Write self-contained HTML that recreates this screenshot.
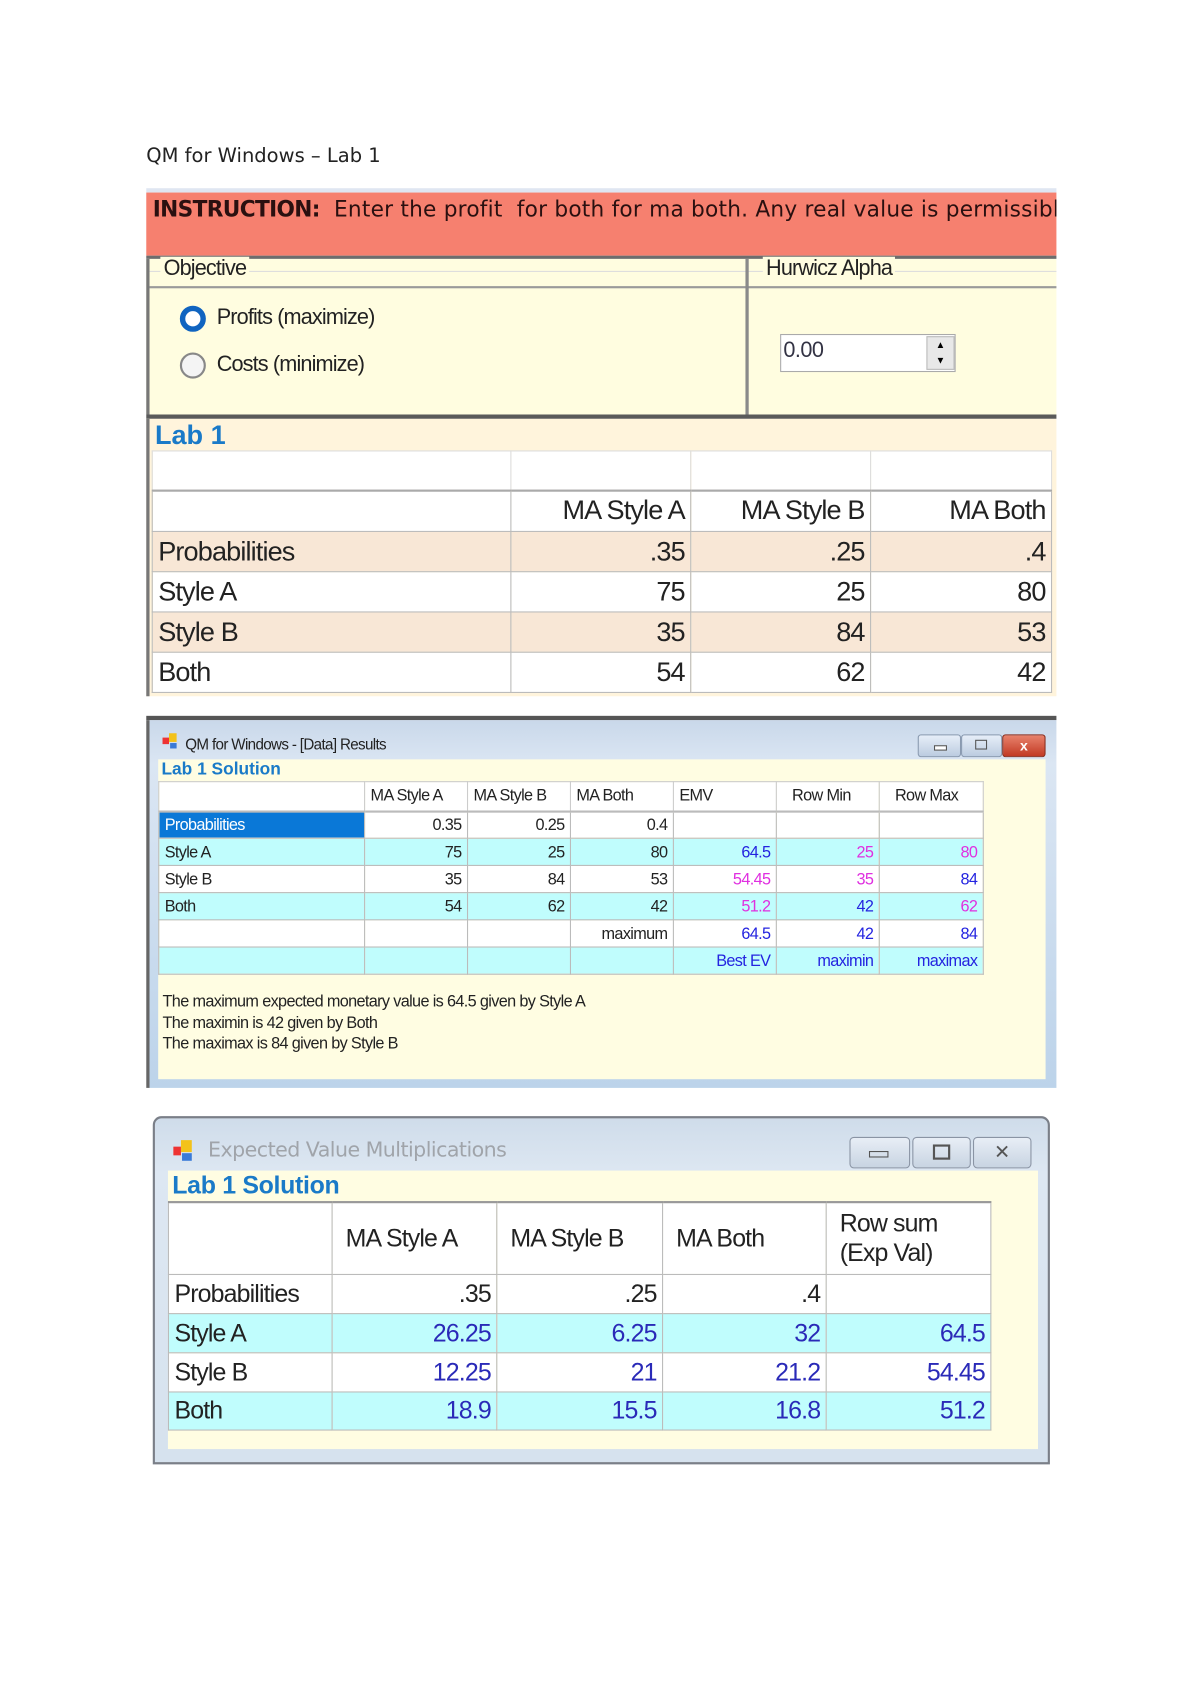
<!DOCTYPE html>
<html><head><meta charset="utf-8">
<style>
html,body{margin:0;padding:0;background:#fff;width:1200px;height:1696px;overflow:hidden}
#w{position:absolute;left:0;top:0;width:1103px;height:1560px;transform:scale(1.0835,1.0879);transform-origin:0 0;font-family:"Liberation Sans",Arial,sans-serif}
.a{position:absolute}
table{border-collapse:collapse;table-layout:fixed;position:absolute}
td{padding:0 5px;white-space:nowrap;overflow:hidden}
.r{text-align:right}
</style></head><body><div id="w">

<div class="a" style="left:135px;top:133px;font-family:'DejaVu Sans',sans-serif;font-size:18px;color:#222">QM for Windows – Lab 1</div>

<!-- Panel 1 -->
<div class="a" style="left:135px;top:173px;width:840px;height:4px;background:#dfe6f2"></div>
<div class="a" style="left:135px;top:177px;width:840px;height:58px;background:#f6806f;overflow:hidden">
 <div class="a" style="left:6px;top:3px;font-family:'DejaVu Sans',sans-serif;font-size:20px;color:#2a1010;white-space:nowrap;letter-spacing:0.2px"><b style="letter-spacing:-0.6px">INSTRUCTION:</b>&nbsp; Enter the profit&nbsp; for both for ma both. Any real value is permissible</div>
</div>
<div class="a" style="left:135px;top:235px;width:840px;height:3px;background:#6d6d6d"></div>
<div class="a" style="left:135px;top:238px;width:840px;height:143px;background:#fffde0;border-left:3px solid #777;box-sizing:border-box"></div>
<div class="a" style="left:138px;top:263px;width:837px;height:2px;background:#9a9a9a"></div>
<div class="a" style="left:138px;top:249px;width:837px;height:1px;background:#dddddd"></div>
<div class="a" style="left:688px;top:238px;width:3px;height:143px;background:#8a8a8a"></div>
<div class="a" style="left:148px;top:236px;padding:0 3px;background:#fffde0;font-size:20px;color:#222;letter-spacing:-0.8px">Objective</div>
<div class="a" style="left:704px;top:236px;padding:0 3px;background:#fffde0;font-size:20px;color:#222;letter-spacing:-0.8px">Hurwicz Alpha</div>
<div class="a" style="left:166px;top:281px;width:14px;height:14px;border-radius:50%;border:5px solid #1064c0;background:#fff"></div>
<div class="a" style="left:200px;top:281px;font-size:20px;color:#222;letter-spacing:-0.8px">Profits (maximize)</div>
<div class="a" style="left:166px;top:324px;width:20px;height:20px;border-radius:50%;border:2px solid #888;background:#f4f4f4"></div>
<div class="a" style="left:200px;top:324px;font-size:20px;color:#222;letter-spacing:-0.8px">Costs (minimize)</div>
<div class="a" style="left:720px;top:307px;width:160px;height:33px;background:#fff;border:1px solid #aaa"></div>
<div class="a" style="left:723px;top:311px;font-size:20px;color:#334;letter-spacing:-0.5px">0.00</div>
<div class="a" style="left:855px;top:309px;width:24px;height:29px;background:#e8e8e8;border:1px solid #bbb;font-size:9px;text-align:center;line-height:14px">▲<br>▼</div>
<div class="a" style="left:135px;top:381px;width:840px;height:4px;background:#5a5a5a"></div>
<div class="a" style="left:135px;top:385px;width:840px;height:255px;background:#fff4dc;border-left:3px solid #777;box-sizing:border-box"></div>
<div class="a" style="left:143px;top:386px;font-size:25px;font-weight:bold;color:#1a7ac8">Lab 1</div>
<table style="left:140px;top:414px;width:830px;font-size:25px;color:#222;letter-spacing:-0.8px">
<colgroup><col style="width:331px"><col style="width:166px"><col style="width:166px"><col style="width:167px"></colgroup>
<tr style="height:36px;background:#fff"><td style="border:1px solid #ddd;border-bottom:2px solid #aaa"></td><td style="border:1px solid #ddd;border-bottom:2px solid #aaa"></td><td style="border:1px solid #ddd;border-bottom:2px solid #aaa"></td><td style="border:1px solid #ddd;border-bottom:2px solid #aaa"></td></tr>
<tr style="height:38px;background:#fff"><td style="border:1px solid #bbb"></td><td class="r" style="border:1px solid #bbb">MA Style A</td><td class="r" style="border:1px solid #bbb">MA Style B</td><td class="r" style="border:1px solid #bbb">MA Both</td></tr>
<tr style="height:37px;background:#f8e7d6"><td style="border:1px solid #bbb">Probabilities</td><td class="r" style="border:1px solid #bbb">.35</td><td class="r" style="border:1px solid #bbb">.25</td><td class="r" style="border:1px solid #bbb">.4</td></tr>
<tr style="height:37px;background:#fff"><td style="border:1px solid #bbb">Style A</td><td class="r" style="border:1px solid #bbb">75</td><td class="r" style="border:1px solid #bbb">25</td><td class="r" style="border:1px solid #bbb">80</td></tr>
<tr style="height:37px;background:#f8e7d6"><td style="border:1px solid #bbb">Style B</td><td class="r" style="border:1px solid #bbb">35</td><td class="r" style="border:1px solid #bbb">84</td><td class="r" style="border:1px solid #bbb">53</td></tr>
<tr style="height:37px;background:#fff"><td style="border:1px solid #bbb">Both</td><td class="r" style="border:1px solid #bbb">54</td><td class="r" style="border:1px solid #bbb">62</td><td class="r" style="border:1px solid #bbb">42</td></tr>
</table>

<!-- Panel 2 -->
<div class="a" style="left:135px;top:658px;width:840px;height:4px;background:#555"></div>
<div class="a" style="left:135px;top:662px;width:840px;height:338px;background:linear-gradient(#c9d8ea,#dbe6f3 40px,#bcd3ea);border-left:3px solid #666;box-sizing:border-box"></div>
<div class="a" style="left:150px;top:678px;width:6px;height:6px;background:#e33"></div>
<div class="a" style="left:156px;top:674px;width:7px;height:8px;background:#f3c21a"></div>
<div class="a" style="left:157px;top:683px;width:6px;height:5px;background:#3a7ad8"></div>
<div class="a" style="left:171px;top:676px;font-size:14px;color:#222;letter-spacing:-0.6px">QM for Windows - [Data] Results</div>
<div class="a" style="left:847px;top:675px;width:38px;height:19px;border:1px solid #8a9ab0;border-radius:3px;background:linear-gradient(#e6eef8,#bccce0)"><div class="a" style="left:14px;top:9px;width:10px;height:3px;border:1px solid #555;background:#fff"></div></div>
<div class="a" style="left:887px;top:675px;width:36px;height:19px;border:1px solid #8a9ab0;border-radius:3px;background:linear-gradient(#e6eef8,#bccce0)"><div class="a" style="left:12px;top:4px;width:9px;height:7px;border:1px solid #555"></div></div>
<div class="a" style="left:925px;top:675px;width:38px;height:19px;border:1px solid #8b3020;border-radius:3px;background:linear-gradient(#e8826c,#c23a24);color:#fff;font-weight:bold;font-size:13px;text-align:center;line-height:19px">x</div>
<div class="a" style="left:146px;top:698px;width:819px;height:294px;background:#fffde2"></div>
<div class="a" style="left:149px;top:699px;font-size:16px;font-weight:bold;color:#1a7ac8">Lab 1 Solution</div>
<table style="left:146px;top:718px;width:761px;font-size:15px;color:#222;letter-spacing:-0.6px">
<colgroup><col style="width:190px"><col style="width:95px"><col style="width:95px"><col style="width:95px"><col style="width:95px"><col style="width:95px"><col style="width:96px"></colgroup>
<tr style="height:27px;background:#fff"><td style="border:1px solid #ccc;border-bottom:2px solid #bbb"></td><td style="border:1px solid #ccc;border-bottom:2px solid #bbb">MA Style A</td><td style="border:1px solid #ccc;border-bottom:2px solid #bbb">MA Style B</td><td style="border:1px solid #ccc;border-bottom:2px solid #bbb">MA Both</td><td style="border:1px solid #ccc;border-bottom:2px solid #bbb">EMV</td><td style="border:1px solid #ccc;border-bottom:2px solid #bbb;padding-left:14px">Row Min</td><td style="border:1px solid #ccc;border-bottom:2px solid #bbb;padding-left:14px">Row Max</td></tr>
<tr style="height:25px;background:#fff"><td style="border:1px solid #bbb;background:#0a78d7;color:#fff">Probabilities</td><td class="r" style="border:1px solid #bbb">0.35</td><td class="r" style="border:1px solid #bbb">0.25</td><td class="r" style="border:1px solid #bbb">0.4</td><td style="border:1px solid #bbb"></td><td style="border:1px solid #bbb"></td><td style="border:1px solid #bbb"></td></tr>
<tr style="height:25px;background:#c0fdfd"><td style="border:1px solid #bbb">Style A</td><td class="r" style="border:1px solid #bbb">75</td><td class="r" style="border:1px solid #bbb">25</td><td class="r" style="border:1px solid #bbb">80</td><td class="r" style="border:1px solid #bbb;color:#2424e0">64.5</td><td class="r" style="border:1px solid #bbb;color:#e030e0">25</td><td class="r" style="border:1px solid #bbb;color:#e030e0">80</td></tr>
<tr style="height:25px;background:#fff"><td style="border:1px solid #bbb">Style B</td><td class="r" style="border:1px solid #bbb">35</td><td class="r" style="border:1px solid #bbb">84</td><td class="r" style="border:1px solid #bbb">53</td><td class="r" style="border:1px solid #bbb;color:#e030e0">54.45</td><td class="r" style="border:1px solid #bbb;color:#e030e0">35</td><td class="r" style="border:1px solid #bbb;color:#2424e0">84</td></tr>
<tr style="height:25px;background:#c0fdfd"><td style="border:1px solid #bbb">Both</td><td class="r" style="border:1px solid #bbb">54</td><td class="r" style="border:1px solid #bbb">62</td><td class="r" style="border:1px solid #bbb">42</td><td class="r" style="border:1px solid #bbb;color:#e030e0">51.2</td><td class="r" style="border:1px solid #bbb;color:#2424e0">42</td><td class="r" style="border:1px solid #bbb;color:#e030e0">62</td></tr>
<tr style="height:25px;background:#fff"><td style="border:1px solid #bbb"></td><td style="border:1px solid #bbb"></td><td style="border:1px solid #bbb"></td><td class="r" style="border:1px solid #bbb">maximum</td><td class="r" style="border:1px solid #bbb;color:#2424e0">64.5</td><td class="r" style="border:1px solid #bbb;color:#2424e0">42</td><td class="r" style="border:1px solid #bbb;color:#2424e0">84</td></tr>
<tr style="height:25px;background:#c0fdfd"><td style="border:1px solid #bbb"></td><td style="border:1px solid #bbb"></td><td style="border:1px solid #bbb"></td><td style="border:1px solid #bbb"></td><td class="r" style="border:1px solid #bbb;color:#2424e0">Best EV</td><td class="r" style="border:1px solid #bbb;color:#2424e0">maximin</td><td class="r" style="border:1px solid #bbb;color:#2424e0">maximax</td></tr>
</table>
<div class="a" style="left:150px;top:911px;font-size:15px;line-height:19.5px;color:#222;letter-spacing:-0.6px">The maximum expected monetary value is 64.5 given by Style A<br>The maximin is 42 given by Both<br>The maximax is 84 given by Style B</div>

<!-- Panel 3 -->
<div class="a" style="left:141px;top:1026px;width:828px;height:320px;border:2px solid #7a7f88;border-radius:8px 8px 0 0;box-sizing:border-box;background:linear-gradient(#cfdcea,#dde7f2 50px,#d6e2ee)"></div>
<div class="a" style="left:160px;top:1054px;width:7px;height:8px;background:#e33"></div>
<div class="a" style="left:167px;top:1048px;width:10px;height:11px;background:#f3c21a"></div>
<div class="a" style="left:168px;top:1060px;width:9px;height:7px;background:#3a7ad8"></div>
<div class="a" style="left:192px;top:1046px;font-family:'DejaVu Sans',sans-serif;font-size:19px;color:#a0a4aa;letter-spacing:-0.5px">Expected Value Multiplications</div>
<div class="a" style="left:784px;top:1045px;width:54px;height:27px;border:1px solid #8a94a4;border-radius:4px;background:linear-gradient(#e8eef6,#c8d4e2)"><div class="a" style="left:17px;top:12px;width:16px;height:4px;border:1px solid #555"></div></div>
<div class="a" style="left:842px;top:1045px;width:52px;height:27px;border:1px solid #8a94a4;border-radius:4px;background:linear-gradient(#e8eef6,#c8d4e2)"><div class="a" style="left:18px;top:6px;width:12px;height:10px;border:2px solid #555"></div></div>
<div class="a" style="left:898px;top:1045px;width:52px;height:27px;border:1px solid #8a94a4;border-radius:4px;background:linear-gradient(#e8eef6,#c8d4e2);text-align:center;font-size:18px;line-height:27px;color:#555">✕</div>
<div class="a" style="left:155px;top:1076px;width:803px;height:256px;background:#fffde2"></div>
<div class="a" style="left:159px;top:1076px;font-size:23px;font-weight:bold;color:#1a7ac8;letter-spacing:-0.3px">Lab 1 Solution</div>
<table style="left:155px;top:1104px;width:759px;font-size:23px;color:#222;letter-spacing:-0.8px">
<colgroup><col style="width:151px"><col style="width:152px"><col style="width:153px"><col style="width:151px"><col style="width:152px"></colgroup>
<tr style="height:66px;background:#fff"><td style="border:1px solid #bbb;border-top:2px solid #999"></td><td style="border:1px solid #bbb;border-top:2px solid #999;padding-left:12px">MA Style A</td><td style="border:1px solid #bbb;border-top:2px solid #999;padding-left:12px">MA Style B</td><td style="border:1px solid #bbb;border-top:2px solid #999;padding-left:12px">MA Both</td><td style="border:1px solid #bbb;border-top:2px solid #999;padding-left:12px;line-height:27px">Row sum<br>(Exp Val)</td></tr>
<tr style="height:36px;background:#fff"><td style="border:1px solid #bbb">Probabilities</td><td class="r" style="border:1px solid #bbb">.35</td><td class="r" style="border:1px solid #bbb">.25</td><td class="r" style="border:1px solid #bbb">.4</td><td style="border:1px solid #bbb"></td></tr>
<tr style="height:36px;background:#c0fdfd;color:#2a2ab8"><td style="border:1px solid #bbb;color:#222">Style A</td><td class="r" style="border:1px solid #bbb">26.25</td><td class="r" style="border:1px solid #bbb">6.25</td><td class="r" style="border:1px solid #bbb">32</td><td class="r" style="border:1px solid #bbb">64.5</td></tr>
<tr style="height:36px;background:#fff;color:#2a2ab8"><td style="border:1px solid #bbb;color:#222">Style B</td><td class="r" style="border:1px solid #bbb">12.25</td><td class="r" style="border:1px solid #bbb">21</td><td class="r" style="border:1px solid #bbb">21.2</td><td class="r" style="border:1px solid #bbb">54.45</td></tr>
<tr style="height:35px;background:#c0fdfd;color:#2a2ab8"><td style="border:1px solid #bbb;color:#222">Both</td><td class="r" style="border:1px solid #bbb">18.9</td><td class="r" style="border:1px solid #bbb">15.5</td><td class="r" style="border:1px solid #bbb">16.8</td><td class="r" style="border:1px solid #bbb">51.2</td></tr>
</table>

</div></body></html>
